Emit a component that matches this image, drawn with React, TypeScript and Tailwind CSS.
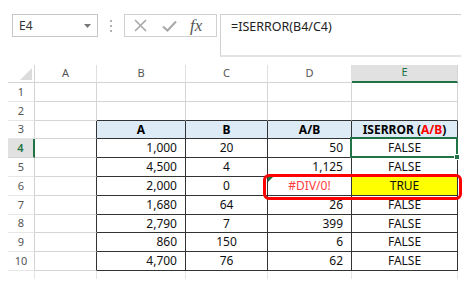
import React from "react";

const LIGHT = "#d4d4d4";

type RowData = { b: string; c: string; d: string; e: string };
const data: RowData[] = [
  { b: "1,000", c: "20", d: "50", e: "FALSE" },
  { b: "4,500", c: "4", d: "1,125", e: "FALSE" },
  { b: "2,000", c: "0", d: "#DIV/0!", e: "TRUE" },
  { b: "1,680", c: "64", d: "26", e: "FALSE" },
  { b: "2,790", c: "7", d: "399", e: "FALSE" },
  { b: "860", c: "150", d: "6", e: "FALSE" },
  { b: "4,700", c: "76", d: "62", e: "FALSE" },
];

const heights = ["h-[19px]", "h-[19px]", "h-[18px]", "h-[19px]", "h-[19px]", "h-[19px]", "h-[19px]", "h-[18px]", "h-[19px]", "h-[19px]"];

function Toolbar() {
  return (
    <div className="flex h-[57px] items-start pt-[14px]">
      <div className="ml-[12px] flex h-[23px] w-[86px] items-center justify-between border border-[#c6c6c6] pl-[6px] pr-[6px] text-[12px] text-[#333]">
        <span>E4</span>
        <svg width="7" height="4" viewBox="0 0 7 4">
          <path d="M0 0 L7 0 L3.5 4 Z" fill="#777" />
        </svg>
      </div>
      <div className="ml-[11px] mt-[6px] flex h-[12px] w-[3px] flex-col items-center justify-between">
        <div className="h-[2px] w-[2px] bg-[#b0b0b0]" />
        <div className="h-[2px] w-[2px] bg-[#b0b0b0]" />
        <div className="h-[2px] w-[2px] bg-[#b0b0b0]" />
      </div>
      <div className="ml-[12px] flex h-[23px] w-[93px] items-center border border-[#d0d0d0]">
        <svg className="ml-[9px]" width="13" height="13" viewBox="0 0 13 13">
          <path d="M1 1 L12 12 M12 1 L1 12" stroke="#a8a8a8" strokeWidth="1.6" />
        </svg>
        <svg className="ml-[15px]" width="15" height="12" viewBox="0 0 15 12">
          <path d="M1 6.5 L5.5 10.5 L14 1.5" stroke="#a8a8a8" strokeWidth="2" fill="none" />
        </svg>
        <span className="ml-[13px] font-['Liberation_Serif',serif] text-[17px] italic leading-none text-[#555]">fx</span>
      </div>
      <div className="ml-[3px] flex h-[43px] w-[241px] items-start border-l border-t border-b-2 border-l-[#d0d0d0] border-t-[#d0d0d0] border-b-[#e2e2e2] pl-[10px] pt-[3px] text-[12.5px] text-[#222]">
        =ISERROR(B4/C4)
      </div>
    </div>
  );
}

function Grid() {
  const colHeaders = ["A", "B", "C", "D", "E"];
  const cells: React.ReactNode[] = [];

  // header row
  cells.push(
    <div key="corner" className="relative h-[18px] border-r border-b border-r-[#d4d4d4] border-b-[#d4d4d4]">
      <svg className="absolute bottom-[2px] right-[2px]" width="12" height="12" viewBox="0 0 12 12">
        <path d="M12 0 L12 12 L0 12 Z" fill="#dcdcdc" />
      </svg>
    </div>
  );
  colHeaders.forEach((h) => {
    const sel = h === "E";
    cells.push(
      <div
        key={"h" + h}
        className={
          sel
            ? "flex h-[18px] items-center justify-center border-r border-b-2 border-r-[#d4d4d4] border-b-[#217346] bg-[#e1e1e1] pb-[1px] text-[11px] text-[#217346]"
            : "flex h-[18px] items-center justify-center border-r border-b border-r-[#e0e0e0] border-b-[#d4d4d4] pb-[1px] text-[11px] text-[#555]"
        }
      >
        {h}
      </div>
    );
  });

  for (let r = 1; r <= 10; r++) {
    const hc = heights[r - 1];
    const inTable = r >= 3;
    const rowSel = r === 4;
    cells.push(
      <div
        key={"rh" + r}
        className={
          rowSel
            ? `${hc} flex items-center justify-center border-r-2 border-b border-r-[#217346] border-b-[#d4d4d4] bg-[#e1e1e1] text-[11px] font-semibold text-[#217346]`
            : `${hc} flex items-center justify-center border-r border-b border-r-[#d4d4d4] border-b-[#e6e6e6] text-[11px] text-[#555]`
        }
      >
        {r}
      </div>
    );
    // col A
    cells.push(
      <div
        key={"a" + r}
        className={
          inTable
            ? `${hc} border-r border-b border-r-[#333] border-b-[#d4d4d4]`
            : `${hc} border-r border-b border-r-[#d4d4d4] border-b-[#d4d4d4]`
        }
      />
    );
    if (r <= 2) {
      const bottomDark = r === 2;
      ["b", "c", "d", "e"].forEach((c) => {
        cells.push(
          <div
            key={c + r}
            className={
              bottomDark
                ? `${hc} border-r border-b border-r-[#d4d4d4] border-b-[#333]`
                : `${hc} border-r border-b border-r-[#d4d4d4] border-b-[#d4d4d4]`
            }
          />
        );
      });
    } else if (r === 3) {
      const base = `${hc} flex items-center justify-center border-r border-b border-[#333] bg-[#ddebf7] text-[12px] font-bold text-black`;
      cells.push(<div key="b3" className={base}>A</div>);
      cells.push(<div key="c3" className={base}>B</div>);
      cells.push(<div key="d3" className={base}>A/B</div>);
      cells.push(
        <div key="e3" className={base}>
          ISERROR (<span className="text-[#ff0000]">A/B</span>)
        </div>
      );
    } else {
      const d = data[r - 4];
      const base = `${hc} flex items-center border-r border-b border-[#333] text-[12px] text-[#111]`;
      cells.push(
        <div key={"b" + r} className={`${base} justify-end pr-[8px]`}>
          {d.b}
        </div>
      );
      cells.push(
        <div key={"c" + r} className={`${base} justify-center`}>
          {d.c}
        </div>
      );
      if (r === 6) {
        cells.push(
          <div key={"d" + r} className={`${base} relative justify-center text-[#ff3b3b]`}>
            <svg className="absolute left-0 top-0" width="5" height="5" viewBox="0 0 5 5">
              <path d="M0 0 L5 0 L0 5 Z" fill="#217346" />
            </svg>
            {d.d}
            <div className="absolute left-[-5px] top-[-3px] z-20 h-[26px] w-[199px] rounded-[6px] border-[3px] border-[#ff0000]" />
          </div>
        );
      } else {
        cells.push(
          <div key={"d" + r} className={`${base} justify-end pr-[8px]`}>
            {d.d}
          </div>
        );
      }
      const eBg = r === 6 ? " bg-[#ffff00]" : "";
      cells.push(
        <div key={"e" + r} className={`${base} relative justify-center${eBg}`}>
          {d.e}
          {r === 4 && (
            <div className="absolute left-[-2px] top-[-2px] z-10 h-[21px] w-[108px] border-2 border-[#217346]">
              <div className="absolute bottom-[-4px] right-[-4px] h-[6px] w-[6px] border border-white bg-[#217346]" />
            </div>
          )}
        </div>
      );
    }
  }
  // partial row 11
  for (let i = 0; i < 6; i++) {
    cells.push(<div key={"p" + i} className="h-[8px] border-r border-r-[#e4e4e4]" />);
  }

  return (
    <div className="ml-[8px] mt-[8px] grid w-[450px] grid-cols-[27px_62px_89px_82px_84px_106px]">{cells}</div>
  );
}

export default function App() {
  return (
    <div className="relative h-[284px] w-[476px] overflow-hidden bg-white font-['Noto_Sans',sans-serif]">
      <Toolbar />
      <Grid />
    </div>
  );
}
